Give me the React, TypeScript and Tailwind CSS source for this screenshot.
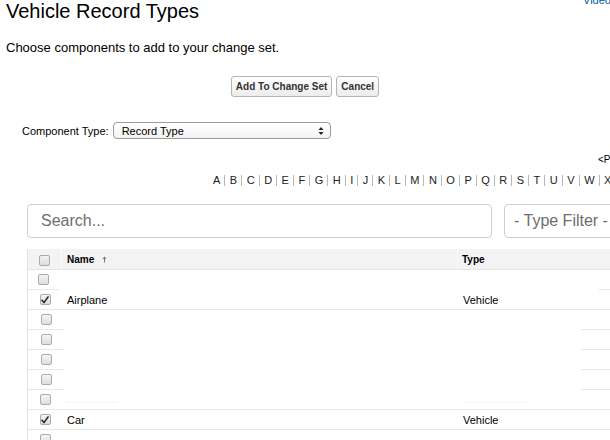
import React from 'react';

const letters = 'ABCDEFGHIJKLMNOPQRSTUVWXYZ'.split('').concat(['Other', 'All']);

type Row = { name?: string; type?: string; checked?: boolean; full?: boolean; edge?: 'short' | 'long'; smudge?: boolean };

const rows: Row[] = [
  { edge: 'short' },
  { name: 'Airplane', type: 'Vehicle', checked: true, full: true },
  { edge: 'long' },
  { edge: 'long' },
  { edge: 'long' },
  { edge: 'long' },
  { full: true, smudge: true },
  { name: 'Car', type: 'Vehicle', checked: true, full: true },
  { full: true },
];

function Checkbox({ checked }: { checked?: boolean }) {
  return (
    <span className="flex h-[11px] w-[11px] items-center justify-center rounded-[2px] border border-[#ababab] bg-gradient-to-b from-[#f4f4f4] to-[#dedede]">
      {checked && (
        <svg width="8" height="8" viewBox="0 0 8 8">
          <path d="M1 4.3 L3 6.6 L7 1" fill="none" stroke="#2b2b2b" strokeWidth="1.6" strokeLinecap="round" strokeLinejoin="round" />
        </svg>
      )}
    </span>
  );
}

export default function App() {
  return (
    <div className="h-[440px] w-[610px] overflow-hidden bg-white font-['Liberation_Sans',Arial,sans-serif] text-black">
      {/* title */}
      <div className="grid h-[21px] grid-cols-[583px_auto]">
        <h1 className="pl-[6px] pt-[1px] text-[20px] leading-[20px] whitespace-nowrap">Vehicle Record Types</h1>
        <a className="-mt-[6px] text-[11px] leading-[12px] whitespace-nowrap text-[#015ba7]">Video Tutorial</a>
      </div>

      <p className="mt-[19px] pl-[6px] text-[13px] leading-[16px]">Choose components to add to your change set.</p>

      <div className="mt-[20px] flex justify-center gap-[4px]">
        <button className="h-[21px] rounded-[3px] border border-[#b5b5b5] bg-gradient-to-b from-white to-[#ececec] px-[4px] text-[10px] font-bold text-[#333]">
          Add To Change Set
        </button>
        <button className="h-[21px] rounded-[3px] border border-[#b5b5b5] bg-gradient-to-b from-white to-[#ececec] px-[4px] text-[10px] font-bold text-[#333]">
          Cancel
        </button>
      </div>

      <div className="mt-[25px] flex items-center gap-[4px] pl-[22px]">
        <span className="text-[11px] leading-[14px]">Component Type:</span>
        <div className="flex h-[17px] w-[218px] items-center justify-between rounded-[4px] border border-[#9c9c9c] bg-gradient-to-b from-white to-[#f3f3f3] pl-[8px] pr-[6px]">
          <span className="text-[11px] leading-[14px]">Record Type</span>
          <svg width="6" height="10" viewBox="0 0 6 10">
            <path d="M0.5 4 L3 1 L5.5 4 Z" fill="#222" />
            <path d="M0.5 6 L3 9 L5.5 6 Z" fill="#222" />
          </svg>
        </div>
      </div>

      <div className="mt-[15px] pl-[598px] text-[10px] leading-[12px] whitespace-nowrap">&lt;Previous Page</div>

      <div className="mt-[7px] flex w-max items-center pl-[213px] text-[11px] leading-[14px] whitespace-nowrap text-[#222]">
        {letters.map((l, i) => (
          <React.Fragment key={l}>
            {i > 0 && <span className="ml-[4px] mr-[4.5px] h-[11px] w-px shrink-0 bg-[#b8b8b8]" />}
            <span className="shrink-0">{l}</span>
          </React.Fragment>
        ))}
      </div>

      <div className="mt-[17px] flex gap-[12px] pl-[27px]">
        <div className="flex h-[34px] w-[465px] shrink-0 items-center rounded-[4px] border border-[#cfcfcf] pl-[13px] text-[16px] text-[#6e6e6e]">
          Search...
        </div>
        <div className="flex h-[34px] w-[200px] shrink-0 items-center rounded-[4px] border border-[#cfcfcf] pl-[9px] text-[16px] text-[#6e6e6e]">
          - Type Filter -
        </div>
      </div>

      <div className="ml-[27px] mt-[11px] w-[583px] border-l border-[#e2e2e2]">
        <div className="flex h-[21px] border-b border-[#e4e4e4] bg-[#f3f3f3] text-[10px] font-bold">
          <div className="flex w-[34px] items-center justify-center border-r border-[#fbfbfb] pt-[2px]">
            <Checkbox />
          </div>
          <div className="flex w-[396px] items-center gap-[8px] border-r border-[#fbfbfb] pl-[5px]">
            <span>Name</span>
            <svg width="5" height="7" viewBox="0 0 5 7">
              <path d="M2.5 0.5 L4.5 3 L3 3 L3 6.5 L2 6.5 L2 3 L0.5 3 Z" fill="#777" />
            </svg>
          </div>
          <div className="flex flex-1 items-center pl-[4px]">Type</div>
        </div>

        {rows.map((r, i) => (
          <div key={i} className={`flex h-[20px] text-[11px] leading-[20px] ${r.full ? 'border-b border-[#e6e6e6]' : ''}`}>
            <div className={`flex items-center justify-center ${r.full ? 'w-[34px]' : r.edge === 'short' ? 'w-[31px] border-b border-[#e6e6e6] mr-[3px]' : 'w-[36px] border-b border-[#e6e6e6] -mr-[2px]'}`}>
              <Checkbox checked={r.checked} />
            </div>
            <div className="w-[396px] pl-[5px]">
              {r.name}
              {r.smudge && <div className="mt-[12px] w-[50px] border-t border-dotted border-[#ececec]" />}
            </div>
            <div className="flex flex-1 pl-[5px]">
              {r.type}
              {r.smudge && <div className="ml-[3px] mt-[12px] w-[60px] border-t border-dotted border-[#ececec]" />}
              {!r.full && (
                <div className={`ml-auto h-full border-b border-[#e6e6e6] ${r.edge === 'short' ? 'w-[11px]' : 'w-[29px]'}`} />
              )}
            </div>
          </div>
        ))}
      </div>
    </div>
  );
}
